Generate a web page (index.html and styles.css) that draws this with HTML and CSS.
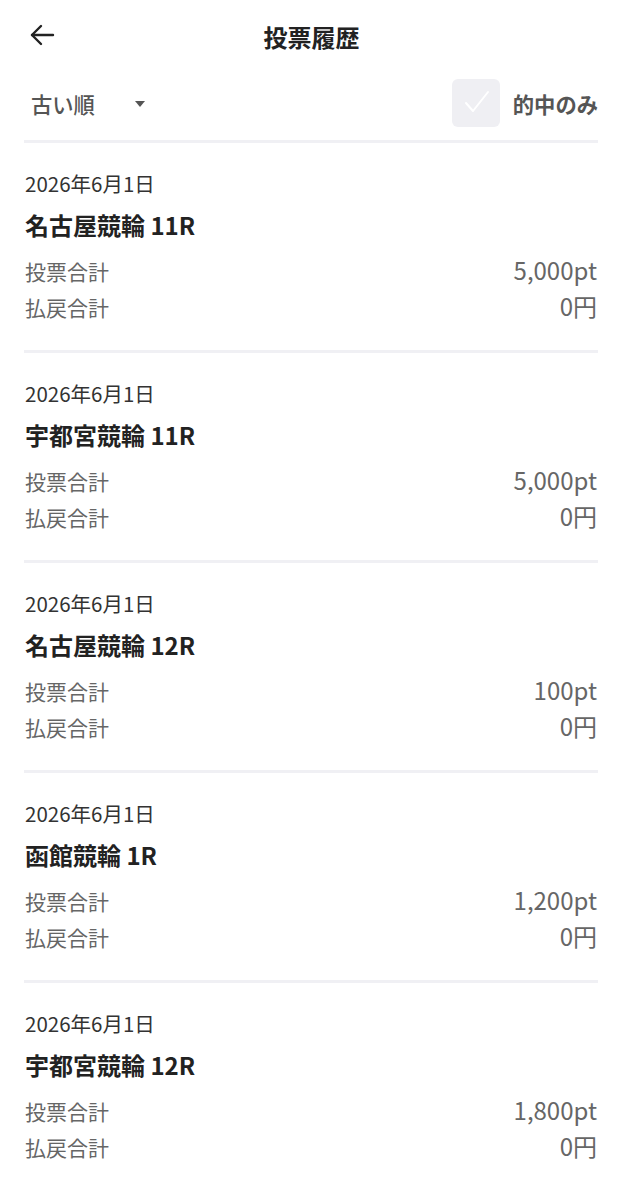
FILE: index.html
```html
<!DOCTYPE html>
<html lang="ja">
<head>
  <meta charset="UTF-8">
  <title>投票履歴</title>
  <link rel="stylesheet" href="styles.css">
</head>
<body>
  <header class="top-bar">
    <button class="back-btn" aria-label="戻る">
      <svg width="26" height="26" viewBox="0 0 26 26" fill="none" stroke="#222" stroke-width="2.4" stroke-linecap="round" stroke-linejoin="round">
        <path d="M24 13H3"/>
        <path d="M12 4l-9 9 9 9"/>
      </svg>
    </button>
    <h1>投票履歴</h1>
  </header>

  <div class="filter-bar">
    <div class="sort-select">
      <span>古い順</span>
      <span class="caret"></span>
    </div>
    <label class="hit-only">
      <span class="check-box">
        <svg width="48" height="48" viewBox="0 0 48 48" fill="none" stroke="#fff" stroke-width="2" stroke-linecap="round" stroke-linejoin="round">
          <path d="M14 24l7 8 15-19"/>
        </svg>
      </span>
      <span>的中のみ</span>
    </label>
  </div>

  <ul class="history-list">
    <li class="history-item">
      <div class="date">2026年6月1日</div>
      <div class="race">名古屋競輪 11R</div>
      <div class="row"><span>投票合計</span><span class="amount">5,000pt</span></div>
      <div class="row"><span>払戻合計</span><span class="amount">0円</span></div>
    </li>
    <li class="history-item">
      <div class="date">2026年6月1日</div>
      <div class="race">宇都宮競輪 11R</div>
      <div class="row"><span>投票合計</span><span class="amount">5,000pt</span></div>
      <div class="row"><span>払戻合計</span><span class="amount">0円</span></div>
    </li>
    <li class="history-item">
      <div class="date">2026年6月1日</div>
      <div class="race">名古屋競輪 12R</div>
      <div class="row"><span>投票合計</span><span class="amount">100pt</span></div>
      <div class="row"><span>払戻合計</span><span class="amount">0円</span></div>
    </li>
    <li class="history-item">
      <div class="date">2026年6月1日</div>
      <div class="race">函館競輪 1R</div>
      <div class="row"><span>投票合計</span><span class="amount">1,200pt</span></div>
      <div class="row"><span>払戻合計</span><span class="amount">0円</span></div>
    </li>
    <li class="history-item">
      <div class="date">2026年6月1日</div>
      <div class="race">宇都宮競輪 12R</div>
      <div class="row"><span>投票合計</span><span class="amount">1,800pt</span></div>
      <div class="row"><span>払戻合計</span><span class="amount">0円</span></div>
    </li>
  </ul>
</body>
</html>
```

FILE: styles.css
```css
body {
  margin: 0;
  padding: 0;
  background-color: #fff;
  font-family: "Noto Sans CJK JP", "Noto Sans", sans-serif;
  color: #222;
}
.top-bar {
  position: relative;
  height: 72px;
  display: flex;
  align-items: center;
  justify-content: center;
}
.top-bar h1 {
  margin: 0;
  font-size: 24px;
  font-weight: 700;
  color: #222;
}
.back-btn {
  position: absolute;
  left: 29px;
  top: 22px;
  padding: 0;
  border: none;
  background: none;
  display: flex;
}
.filter-bar {
  display: flex;
  align-items: center;
  justify-content: space-between;
  padding: 7px 25px 13px 31px;
  height: 48px;
}
.sort-select {
  display: flex;
  align-items: center;
  gap: 40px;
  font-size: 21.3px;
  font-weight: 500;
  color: #555;
}
.caret {
  width: 0;
  height: 0;
  border-left: 5px solid transparent;
  border-right: 5px solid transparent;
  border-top: 6px solid #555;
  margin-top: 2px;
}
.hit-only {
  display: flex;
  align-items: center;
  gap: 13px;
  font-size: 21.3px;
  font-weight: 700;
  color: #555;
}
.check-box {
  width: 48px;
  height: 48px;
  border-radius: 6px;
  background-color: #efeff3;
  display: flex;
}
.history-list {
  list-style: none;
  margin: 0;
  padding: 0;
}
.history-item {
  margin: 0 25px 0 24px;
  padding: 26px 1px 26px 1px;
  border-top: 3px solid #f0f0f4;
}
.date {
  font-size: 20.5px;
  line-height: 28px;
  color: #333;
}
.race {
  margin-top: 12px;
  font-size: 24px;
  line-height: 32px;
  font-weight: 700;
  color: #222;
}
.row {
  display: flex;
  justify-content: space-between;
  align-items: baseline;
  height: 36px;
  font-size: 21px;
  line-height: 36px;
  color: #666;
}
.row .amount {
  font-size: 24px;
}
.race + .row {
  margin-top: 11px;
}
```
